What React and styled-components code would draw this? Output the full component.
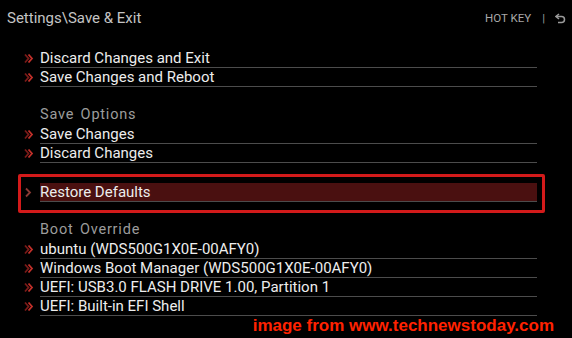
import React from 'react';
import styled, { createGlobalStyle } from 'styled-components';

const GlobalStyle = createGlobalStyle`
    html, body {
        margin: 0;
        padding: 0;
        background: #000;
    }
    body {
        font-family: Roboto, "Liberation Sans", Arial, sans-serif;
    }
`;

const topItems = ['Discard Changes and Exit', 'Save Changes and Reboot'];
const saveItems = ['Save Changes', 'Discard Changes'];
const bootItems = [
    'ubuntu (WDS500G1X0E-00AFY0)',
    'Windows Boot Manager (WDS500G1X0E-00AFY0)',
    'UEFI: USB3.0 FLASH DRIVE 1.00, Partition 1',
    'UEFI: Built-in EFI Shell',
];

const Arrow = ({ single }) => (
    <svg width="10" height="11" viewBox="0 0 10 11">
        {single ? (
            <path d="M2 1.5 L6 5.5 L2 9.5" fill="none" stroke="#8a3a34" strokeWidth="1.8" />
        ) : (
            <>
                <path d="M1 1.5 L4.5 5.5 L1 9.5" fill="none" stroke="#7a1a18" strokeWidth="1.8" />
                <path d="M4.5 1.5 L8 5.5 L4.5 9.5" fill="none" stroke="#c2302a" strokeWidth="1.8" />
            </>
        )}
    </svg>
);

const BackIcon = () => (
    <svg width="11" height="11" viewBox="0 0 11 11">
        <path d="M4 1 L1 3.5 L4 6" fill="none" stroke="#9a9a9a" strokeWidth="1.5" />
        <path d="M1.5 3.5 H6.5 A3 3 0 0 1 6.5 9.5 H3" fill="none" stroke="#9a9a9a" strokeWidth="1.5" />
    </svg>
);

const MenuItem = ({ label, selected, inBox }) => (
    <Item>
        <ArrowCell inBox={inBox}>
            <Arrow single={selected} />
        </ArrowCell>
        <Label selected={selected}>{label}</Label>
    </Item>
);

const App = () => (
    <>
        <GlobalStyle />
        <Screen>
            <Header>
                <Title>Settings\Save &amp; Exit</Title>
                <HotKey>
                    HOT KEY
                    <Divider>|</Divider>
                    <BackIcon />
                </HotKey>
            </Header>
            <List>
                <Group>
                    {topItems.map((t) => (
                        <MenuItem key={t} label={t} />
                    ))}
                </Group>
                <Group gap={18}>
                    <SectionTitle>Save Options</SectionTitle>
                    {saveItems.map((t) => (
                        <MenuItem key={t} label={t} />
                    ))}
                </Group>
                <SelectBox>
                    <MenuItem label="Restore Defaults" selected inBox />
                </SelectBox>
                <Group gap={7}>
                    <SectionTitle>Boot Override</SectionTitle>
                    {bootItems.map((t) => (
                        <MenuItem key={t} label={t} />
                    ))}
                </Group>
            </List>
            <Watermark>image from www.technewstoday.com</Watermark>
        </Screen>
    </>
);

export default App;

const Screen = styled.div`
    width: 572px;
    height: 338px;
    background: #000;
    overflow: hidden;
    display: flex;
    flex-direction: column;
`;

const Header = styled.div`
    display: flex;
    justify-content: space-between;
    align-items: center;
    height: 36px;
    padding: 0 6px 0 7px;
`;

const Title = styled.div`
    color: #c4c4c4;
    font-size: 15px;
`;

const HotKey = styled.div`
    display: flex;
    align-items: center;
    color: #a8a8a8;
    font-size: 11.5px;
`;

const Divider = styled.span`
    margin: 0 10px 0 11px;
    color: #9a9a9a;
`;

const List = styled.div`
    margin-left: 18px;
    width: 527px;
    padding-top: 13px;
`;

const Group = styled.div`
    display: flex;
    flex-direction: column;
    margin-top: ${({ gap }) => (gap ? `${gap}px` : '0')};
`;

const SectionTitle = styled.div`
    height: 20px;
    line-height: 20px;
    padding-left: 22px;
    color: #9c9c9c;
    font-size: 14.5px;
    letter-spacing: 0.8px;
    word-spacing: 2px;
`;

const Item = styled.div`
    display: flex;
    align-items: stretch;
    height: 19px;
`;

const ArrowCell = styled.div`
    width: ${({ inBox }) => (inBox ? '19px' : '22px')};
    padding-left: ${({ inBox }) => (inBox ? '3px' : '6px')};
    box-sizing: border-box;
    display: flex;
    align-items: center;
`;

const Label = styled.div`
    flex: 1;
    margin-right: 8px;
    border-bottom: 1px solid #4c4c4c;
    line-height: 18px;
    font-size: 15px;
    color: #ededed;
    white-space: nowrap;
    background: ${({ selected }) => (selected ? '#4a1010' : 'transparent')};
`;

const SelectBox = styled.div`
    margin-top: 11px;
    border: 3px solid #d31a1a;
    border-radius: 2px;
    padding: 6px 0 8px;
    & ${Label} {
        margin-right: 5px;
    }
`;

const Watermark = styled.div`
    align-self: flex-end;
    margin: 0 18px 0 0;
    color: #ff2200;
    font-family: "Liberation Sans", Arial, sans-serif;
    font-weight: bold;
    font-size: 17px;
`;
